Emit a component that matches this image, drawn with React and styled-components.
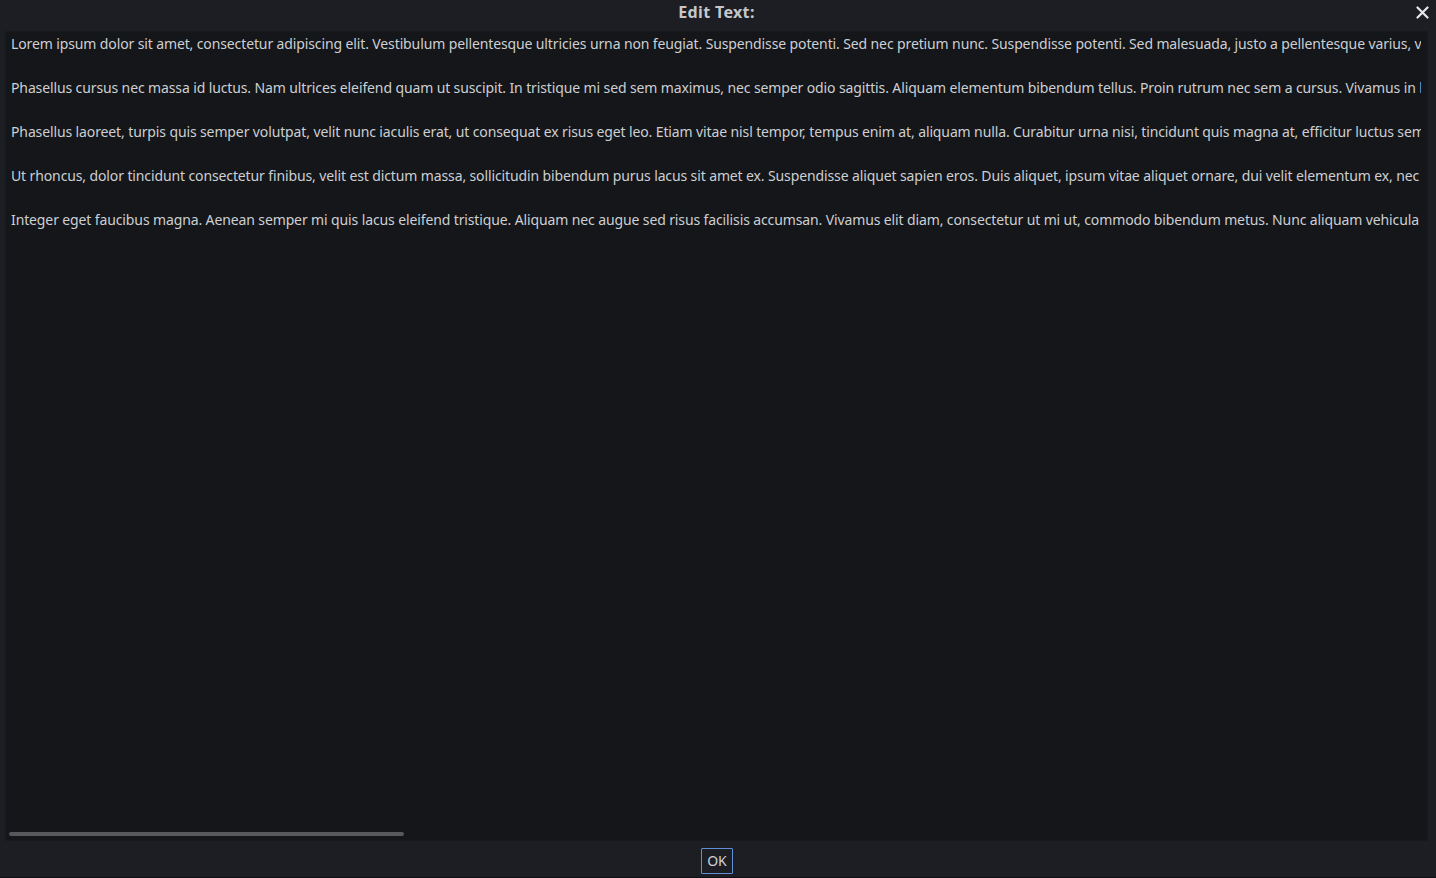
import React from 'react';
import styled, { createGlobalStyle } from 'styled-components';

const GlobalStyle = createGlobalStyle`
  html, body {
    margin: 0;
    padding: 0;
    background: #1c1e24;
  }
  #root {
    height: 100vh;
  }
`;

const Window = styled.div`
  height: 878px;
  display: flex;
  flex-direction: column;
  background: #1c1e24;
  font-family: "Noto Sans", "DejaVu Sans", sans-serif;
  color: #cdcfd2;
  border-bottom: 1px solid #0e0f12;
  box-sizing: border-box;
  overflow: hidden;
`;

const TitleBar = styled.div`
  height: 31px;
  flex: none;
  display: flex;
  align-items: center;
  justify-content: center;
  position: relative;
`;

const Title = styled.h1`
  margin: -7px 0 0 -3px;
  font-size: 16px;
  font-weight: 700;
  color: #c5c7cb;
  letter-spacing: 0.35px;
`;

const CloseButton = styled.button`
  position: absolute;
  top: 3px;
  right: 5px;
  width: 18px;
  height: 18px;
  padding: 0;
  border: none;
  background: none;
  color: #e6e7e9;
  display: flex;
  align-items: center;
  justify-content: center;
  cursor: pointer;
`;

const Body = styled.div`
  flex: 1;
  padding: 0 8px 0 5px;
  display: flex;
  min-height: 0;
`;

const Editor = styled.div`
  flex: 1;
  position: relative;
  background: #14161a;
  border: 1px solid #17191d;
  height: 810px;
  box-sizing: border-box;
  overflow: hidden;
`;

const Lines = styled.div`
  margin: 1px 6px 0 5px;
  overflow: hidden;
  font-size: 14px;
  letter-spacing: -0.12px;
  line-height: 22px;
  white-space: pre;
  color: #cdcfd2;
`;

const Line = styled.div`
  height: 22px;
`;

const ScrollThumb = styled.div`
  position: absolute;
  left: 3px;
  bottom: 4px;
  width: 395px;
  height: 4px;
  border-radius: 2px;
  background: #57585c;
`;

const Footer = styled.div`
  height: 37px;
  flex: none;
  display: flex;
  align-items: center;
  justify-content: center;
`;

const OkButton = styled.button`
  font-family: "Noto Sans", "DejaVu Sans", sans-serif;
  font-size: 14px;
  color: #d0d2d5;
  background: #1c1e24;
  border: 1px solid #5f8fd6;
  height: 26px;
  padding: 0 5px;
  margin-top: 5px;
  margin-left: -2px;
  border-radius: 1px;
  line-height: 22px;
  cursor: pointer;
`;

const paragraphs = [
  'Lorem ipsum dolor sit amet, consectetur adipiscing elit. Vestibulum pellentesque ultricies urna non feugiat. Suspendisse potenti. Sed nec pretium nunc. Suspendisse potenti. Sed malesuada, justo a pellentesque varius, velit lectus tincidunt nisl, at fermentum erat lorem nec nunc.',
  'Phasellus cursus nec massa id luctus. Nam ultrices eleifend quam ut suscipit. In tristique mi sed sem maximus, nec semper odio sagittis. Aliquam elementum bibendum tellus. Proin rutrum nec sem a cursus. Vivamus in lacinia lorem, vel tincidunt ipsum.',
  'Phasellus laoreet, turpis quis semper volutpat, velit nunc iaculis erat, ut consequat ex risus eget leo. Etiam vitae nisl tempor, tempus enim at, aliquam nulla. Curabitur urna nisi, tincidunt quis magna at, efficitur luctus sem. Donec ac ultrices est.',
  'Ut rhoncus, dolor tincidunt consectetur finibus, velit est dictum massa, sollicitudin bibendum purus lacus sit amet ex. Suspendisse aliquet sapien eros. Duis aliquet, ipsum vitae aliquet ornare, dui velit elementum ex, nec luctus magna nisi in arcu.',
  'Integer eget faucibus magna. Aenean semper mi quis lacus eleifend tristique. Aliquam nec augue sed risus facilisis accumsan. Vivamus elit diam, consectetur ut mi ut, commodo bibendum metus. Nunc aliquam vehicula turpis, sit amet mattis dui.',
];

const App = () => {
  return (
    <>
      <GlobalStyle />
      <Window>
        <TitleBar>
          <Title>Edit Text:</Title>
          <CloseButton aria-label="Close">
            <svg width="13" height="13" viewBox="0 0 13 13">
              <path d="M1.5 1.5 L11.5 11.5 M11.5 1.5 L1.5 11.5" stroke="currentColor" strokeWidth="2.2" strokeLinecap="round" />
            </svg>
          </CloseButton>
        </TitleBar>
        <Body>
          <Editor>
            <Lines>
              {paragraphs.map((p, i) => (
                <React.Fragment key={i}>
                  <Line>{p}</Line>
                  <Line />
                </React.Fragment>
              ))}
            </Lines>
            <ScrollThumb />
          </Editor>
        </Body>
        <Footer>
          <OkButton>OK</OkButton>
        </Footer>
      </Window>
    </>
  );
};

export default App;
